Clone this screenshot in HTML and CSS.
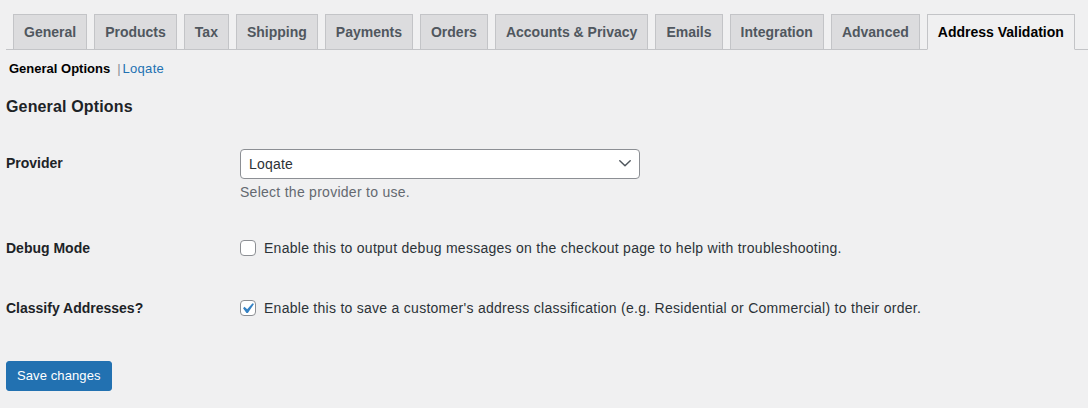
FILE: index.html
```html
<!DOCTYPE html>
<html lang="en">
<head>
<meta charset="utf-8">
<title>Settings - Address Validation</title>
<link rel="stylesheet" href="styles.css">
</head>
<body>
<div class="wrap">
  <nav class="tabs">
    <a class="tab">General</a>
    <a class="tab">Products</a>
    <a class="tab">Tax</a>
    <a class="tab">Shipping</a>
    <a class="tab">Payments</a>
    <a class="tab">Orders</a>
    <a class="tab">Accounts &amp; Privacy</a>
    <a class="tab">Emails</a>
    <a class="tab">Integration</a>
    <a class="tab">Advanced</a>
    <a class="tab tab-active">Address Validation</a>
  </nav>

  <ul class="subnav">
    <li class="subnav-current">General Options</li>
    <li class="subnav-sep">|</li>
    <li class="subnav-link">Loqate</li>
  </ul>

  <h2 class="section-title">General Options</h2>

  <div class="row row-provider">
    <div class="row-label">Provider</div>
    <div class="row-field">
      <div class="select">
        <span class="select-value">Loqate</span>
        <svg class="select-arrow" width="12" height="7" viewBox="0 0 12 7"><polyline points="0.8,0.8 6,5.8 11.2,0.8" fill="none" stroke="#50575e" stroke-width="1.5" stroke-linecap="round" stroke-linejoin="round"/></svg>
      </div>
      <p class="description">Select the provider to use.</p>
    </div>
  </div>

  <div class="row row-debug">
    <div class="row-label">Debug Mode</div>
    <div class="row-field check-line">
      <span class="checkbox"></span>
      <span class="check-text">Enable this to output debug messages on the checkout page to help with troubleshooting.</span>
    </div>
  </div>

  <div class="row row-classify">
    <div class="row-label">Classify Addresses?</div>
    <div class="row-field check-line">
      <span class="checkbox checked"><svg class="checkmark" width="21" height="21" viewBox="0 0 20 20"><path d="M14.83 4.89l1.34.94-5.81 8.38H9.02L5.78 9.67l1.34-1.25 2.57 2.4z" fill="#3582c4"/></svg></span>
      <span class="check-text">Enable this to save a customer's address classification (e.g. Residential or Commercial) to their order.</span>
    </div>
  </div>

  <button class="button-primary">Save changes</button>
</div>
</body>
</html>
```

FILE: styles.css
```css
html, body {
  margin: 0;
  padding: 0;
}

body {
  background: #f0f0f1;
  font-family: "Liberation Sans", Arial, sans-serif;
  font-size: 13px;
  color: #3c434a;
}

.wrap {
  padding-left: 6px;
}

.tabs {
  display: flex;
  padding-top: 14px;
  border-bottom: 1px solid #c3c4c7;
}

.tab {
  margin-left: 7px;
  margin-bottom: -1px;
  padding: 5px 10px;
  border: 1px solid #c3c4c7;
  background: #dcdcde;
  color: #50575e;
  font-size: 14px;
  line-height: 24px;
  font-weight: 700;
  white-space: nowrap;
}

.tab-active {
  background: #f0f0f1;
  border-bottom-color: #f0f0f1;
  color: #000;
}

.subnav {
  display: flex;
  list-style: none;
  margin: 6px 0 0;
  padding: 0 0 0 3px;
  font-size: 13px;
  line-height: 26px;
}

.subnav-current {
  color: #000;
  font-weight: 700;
}

.subnav-sep {
  color: #8c8f94;
  margin-left: 7px;
}

.subnav-link {
  color: #2271b1;
  margin-left: 2px;
  letter-spacing: 0.3px;
}

.section-title {
  margin: 15px 0 0;
  font-size: 16px;
  line-height: 20px;
  font-weight: 700;
  color: #1d2327;
  letter-spacing: 0.15px;
}

.row {
  display: grid;
  grid-template-columns: 234px 400px;
  align-items: start;
}

.row-provider {
  margin-top: 32px;
}

.row-debug {
  margin-top: 36px;
}

.row-classify {
  margin-top: 40px;
}

.row-label {
  font-size: 14px;
  line-height: 20px;
  font-weight: 700;
  color: #1d2327;
  white-space: nowrap;
}

.row-provider .row-label {
  padding-top: 4px;
}

.select {
  box-sizing: border-box;
  width: 400px;
  height: 30px;
  display: flex;
  align-items: center;
  justify-content: space-between;
  padding: 0 8px 0 8px;
  background: #fff;
  border: 1px solid #8c8f94;
  border-radius: 4px;
  color: #2c3338;
  font-size: 14px;
}

.select-value {
  letter-spacing: 0.2px;
}

.select-arrow {
  display: block;
  margin-top: -1px;
}

.description {
  margin: 3px 0 0;
  font-size: 14px;
  line-height: 20px;
  color: #646970;
  white-space: nowrap;
  letter-spacing: 0.27px;
}

.check-line {
  display: flex;
  align-items: center;
  height: 20px;
  white-space: nowrap;
}

.checkbox {
  box-sizing: border-box;
  flex: none;
  width: 16px;
  height: 16px;
  border: 1px solid #8c8f94;
  border-radius: 4px;
  background: #fff;
  margin-right: 8px;
}

.checkmark {
  display: block;
  margin: -3px 0 0 -4px;
}

.check-text {
  font-size: 14px;
  line-height: 20px;
  color: #2c3338;
  letter-spacing: 0.27px;
}

.button-primary {
  display: block;
  margin-top: 43px;
  height: 30px;
  padding: 0 10px;
  background: #2271b1;
  border: 1px solid #2271b1;
  border-radius: 3px;
  color: #fff;
  font-family: "Liberation Sans", Arial, sans-serif;
  font-size: 13px;
  line-height: 28px;
  letter-spacing: 0.1px;
}
```
